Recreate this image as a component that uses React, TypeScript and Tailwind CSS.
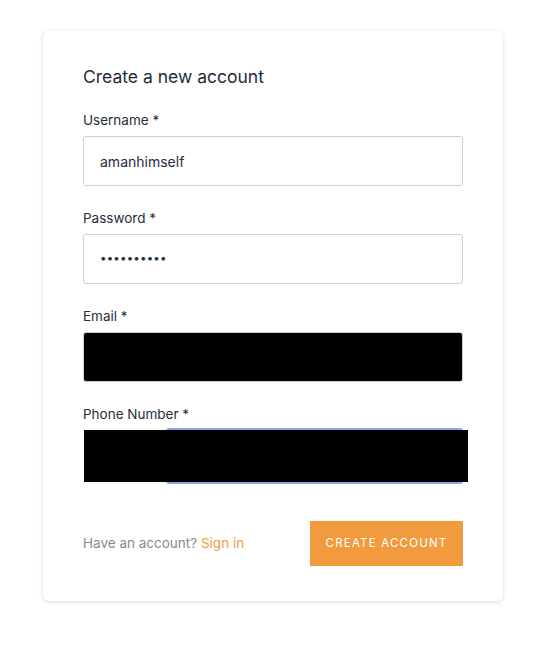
import React from "react";

function Field({ label, children }: { label: string; children: React.ReactNode }) {
  return (
    <div className="flex flex-col">
      <label className="text-[13.5px] leading-5 text-[#1f2d3d] mb-[6px]">{label}</label>
      {children}
    </div>
  );
}

export default function App() {
  return (
    <div className="w-[548px] h-[651px] bg-white pt-[31px] pl-[43px]" style={{ fontFamily: "Inter, 'Noto Sans', sans-serif" }}>
      <div className="w-[460px] h-[570px] bg-white rounded-[6px] shadow-[0_1px_4px_rgba(0,0,0,0.15)] pt-[34px] px-[40px]">
        <h1 className="text-[17.5px] leading-6 text-[#1c2b3a] mb-[21px]">Create a new account</h1>
        <div className="flex flex-col gap-[22px]">
          <Field label="Username *">
            <div className="h-[50px] w-[380px] border border-[#cfcfcf] rounded-[3px] flex items-center px-4 text-[14px] text-[#1f2d3d]">amanhimself</div>
          </Field>
          <Field label="Password *">
            <div className="h-[50px] w-[380px] border border-[#cfcfcf] rounded-[3px] flex items-center px-4 text-[11.5px] text-[#1f2d3d] tracking-[0.2px]">••••••••••</div>
          </Field>
          <Field label="Email *">
            <div className="h-[50px] w-[380px] border border-[#cfcfcf] rounded-[3px] bg-black" />
          </Field>
          <Field label="Phone Number *">
            <div className="relative h-[50px] w-[380px]">
              <div className="absolute left-[83px] top-[-2px] w-[297px] h-[56px] border-[2px] border-[#8aa7e8] rounded-[3px]" />
              <div className="absolute left-[1px] top-0 w-[384px] h-[52px] bg-black" />
            </div>
          </Field>
        </div>
        <div className="mt-[41px] flex items-center justify-between">
          <span className="text-[13.5px] text-[#8a8a8a]">
            Have an account? <span className="text-[#f29b3e]">Sign in</span>
          </span>
          <button className="w-[153px] h-[45px] bg-[#f29b3e] text-white text-[11.5px] tracking-[1.2px]">CREATE ACCOUNT</button>
        </div>
      </div>
    </div>
  );
}
